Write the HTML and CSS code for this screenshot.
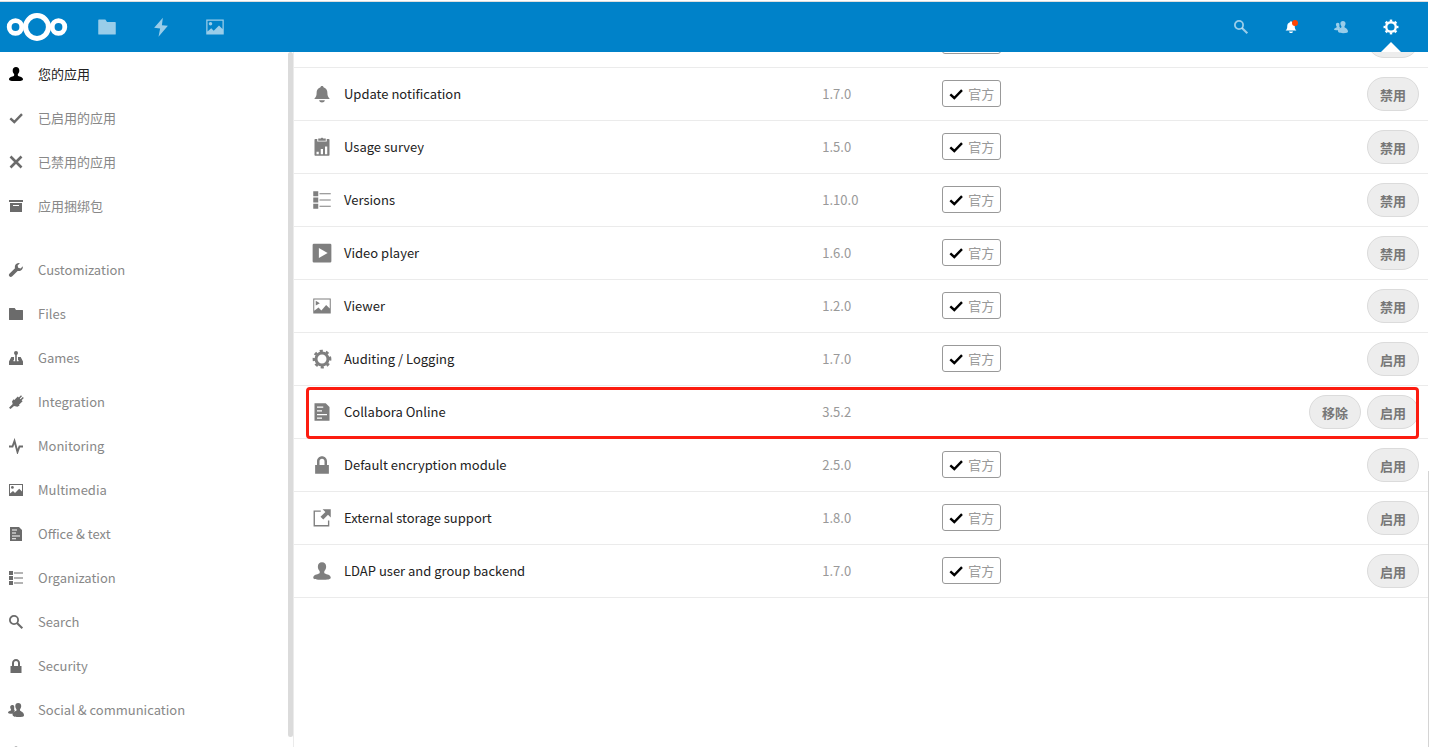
FILE: index.html
```html
<!DOCTYPE html>
<html lang="zh-CN">
<head>
<meta charset="utf-8">
<title>应用</title>
<meta name="viewport" content="width=device-width, initial-scale=1">
<link rel="stylesheet" href="styles.css">
</head>
<body>
<svg class="sprite" aria-hidden="true">
  <symbol id="i-user" viewBox="0 0 16 16"><path d="M8 1C5.900 1 4.700 2.500 4.700 4.400c0 1.300.3 2.300 1.200 3.400.5.700.4 1.700-.1 2.100C4.200 10.600 1 11 1 13.200 1 14.800 3.500 15 8 15s7-.2 7-1.800c0-2.200-3.200-2.600-4.800-3.300-.5-.4-.6-1.400-.1-2.100.9-1.100 1.200-2.100 1.200-3.400C11.300 2.500 10.100 1 8 1z"/></symbol>
  <symbol id="i-check" viewBox="0 0 16 16"><path d="M2.300 8.300 6.300 12 14 4.200" fill="none" stroke="currentColor" stroke-width="2.400"/></symbol>
  <symbol id="i-close" viewBox="0 0 16 16"><path d="M2.500 2.500l11 11M13.500 2.500l-11 11" fill="none" stroke="currentColor" stroke-width="2.600"/></symbol>
  <symbol id="i-box" viewBox="0 0 16 16"><path d="M1 2h14v2H1zM2 5h12v9H2zm3 2v1h6V7z" fill-rule="evenodd"/></symbol>
  <symbol id="i-wrench" viewBox="0 0 16 16"><path d="M14.800 4.300 12.600 6.400 10.200 5.800 9.600 3.400 11.800 1.200C9.800.700 7.700 1.900 7 3.700c-.3 1-.2 1.800 0 2.600L1.400 11.800c-.8.8-.6 1.800 0 2.500s1.900.8 2.600.1L9.600 8.900c2.600.9 5.700-1.200 5.200-4.600z"/></symbol>
  <symbol id="i-folder" viewBox="0 0 16 16"><path d="M1.500 2H6.700L8 4h6.500a.5.5 0 0 1 .5.500v9a.5.5 0 0 1-.5.500h-13a.5.5 0 0 1-.5-.5v-11a.5.5 0 0 1 .5-.5z"/></symbol>
  <symbol id="i-games" viewBox="0 0 16 16"><path d="M1 11.500 3.300 7H6v3h-.5v1.200h5V10H10V7h2.700L15 11.500V15H1z"/><circle cx="8" cy="3" r="2"/><path d="M7.200 4h1.600v8H7.200z"/></symbol>
  <symbol id="i-plug" viewBox="0 0 16 16"><path d="M1 13.700 4.700 10 4 7.500 5.500 5.300 6.300 6 9.800 2.400l1 1L13 1.200l1 1L11.800 4.500 12.500 5.200 14.800 3l1 1-2.200 2.200 1 1-3.600 3.500.6.800-2.200 1.200L6 12l-3.500 3z"/></symbol>
  <symbol id="i-pulse" viewBox="0 0 16 16"><path d="M1 8.500h3.500L6.500 3l3 11 2-5.500H15" fill="none" stroke="currentColor" stroke-width="1.900"/></symbol>
  <symbol id="i-image" viewBox="0 0 16 16"><path d="M1 2h14v12H1zm1 1v8.500L5 9l2 2 4.200-4.200L14 9.500V3z" fill-rule="evenodd"/><circle cx="4.400" cy="5.400" r="1.400"/></symbol>
  <symbol id="i-view" viewBox="0 0 16 16"><path d="M1 2h14v12H1zm.8.800v9L5.200 9.200 7.500 11.500 11.300 7.200 14.200 10V2.800z" fill-rule="evenodd"/><path d="M3 3.800 6.300 5.700 3 7.600z"/></symbol>
  <symbol id="i-doc" viewBox="0 0 16 16"><path d="M2 1h9l3 3v11H2zM4 3.500v1h5v-1zM4 6.500v1h4v-1zM4 9.500v1h8v-1zM4 12.300v1h4v-1z" fill-rule="evenodd"/></symbol>
  <symbol id="i-list" viewBox="0 0 16 16"><path d="M1 1h4v4H1zM1 6h4v4H1zM1 11h4v4H1zM6 2.600h9v.8H6zM6 7.600h9v.8H6zM6 12.600h9v.8H6z"/></symbol>
  <symbol id="i-search" viewBox="0 0 16 16"><circle cx="6" cy="6" r="4.100" fill="none" stroke="currentColor" stroke-width="1.800"/><path d="m9 9 5.300 5.300" stroke="currentColor" stroke-width="2.100"/></symbol>
  <symbol id="i-lock" viewBox="0 0 16 16"><path d="M8 1C5.800 1 4 2.800 4 5v3H2.500v7h11V8H12V5c0-2.200-1.800-4-4-4zm0 2c1.200 0 2 .9 2 2v3H6V5c0-1.100.8-2 2-2z"/></symbol>
  <symbol id="i-users" viewBox="0 0 16 16"><path d="M10.200 1C8.300 1 7.300 2.300 7.300 4c0 1.200.3 2 1 2.900.4.600.3 1.400-.1 1.800C7 9.300 4.500 9.800 4.500 12c0 2.300 1.500 3 5.900 3 4.200 0 5.600-.5 5.600-1.800 0-2.800-2.700-3.600-3.700-4.500-.4-.4-.5-1.200-.1-1.800.7-.9 1-1.700 1-2.900C13.200 2.300 12.100 1 10.200 1z"/><path d="M4.200 3C2.900 3 2.200 4 2.200 5.200c0 .8.200 1.400.7 2 .3.500.2 1-.1 1.300C2 9 0 9.300 0 10.600c0 1 1 1.200 4.600 1.200L7 8.600c-.4-.3-1-.8-.8-1.400V4.200C5.900 3.400 5.200 3 4.200 3z"/></symbol>
  <symbol id="i-bell" viewBox="0 0 16 16"><path d="M8 1.500c-.7 0-1.100.4-1.200 1C4.500 3.200 3.700 5 3.700 7c0 2.600-.5 3.300-1.900 5h12.400c-1.400-1.700-1.900-2.400-1.900-5 0-2-.8-3.800-3.100-4.500-.1-.6-.5-1-1.200-1zM5.700 13c.2 1.200 1.200 1.800 2.300 1.800s2.100-.6 2.300-1.800z"/></symbol>
  <symbol id="i-survey" viewBox="0 0 16 16"><path d="M2.500 1.500h1.700V3.600h7.600V1.500h1.700l.5.500v12.500l-.5.500h-11l-.5-.5V2zM3.600 11.800v2h1.800v-2zM7 9.500v4.300h1.800V9.500zM10.400 7.600v6.200h1.800V7.600z" fill-rule="evenodd"/><path d="M5 1.200h2L7.500.5h1l.5.700h2v1.700H5z"/></symbol>
  <symbol id="i-play" viewBox="0 0 16 16"><path d="M1.500.5h13a1 1 0 0 1 1 1v13a1 1 0 0 1-1 1h-13a1 1 0 0 1-1-1v-13a1 1 0 0 1 1-1zM5.500 4v8L12.500 8z" fill-rule="evenodd"/></symbol>
  <symbol id="i-gear" viewBox="0 0 16 16"><g fill="none" stroke="currentColor"><circle cx="8" cy="8" r="4.800" stroke-width="2.400"/><circle cx="8" cy="8" r="6.500" stroke-width="2" pathLength="16" stroke-dasharray="1 1" stroke-dashoffset=".5"/></g></symbol>
  <symbol id="i-external" viewBox="0 0 16 16"><path d="M7 2.500H1.800v11.700h11.500V10" fill="none" stroke="currentColor" stroke-width="1.100"/><path d="M8.500 1H15v6.500L12.800 5.300 9 9.200 6.800 7 10.700 3.200z"/></symbol>
  <symbol id="i-bolt" viewBox="0 0 16 16"><path d="M9.500.5 2.500 8.500 7.300 9.100 6 15.700 13.500 7 8.700 6.600z"/></symbol>
</svg>

<header class="topbar">
  <a class="logo" href="#" aria-label="Nextcloud">
    <svg viewBox="0 0 62 30" fill="none" stroke="#fff"><circle cx="31" cy="15" r="11.400" stroke-width="5"/><circle cx="9.500" cy="15" r="6.300" stroke-width="4.800"/><circle cx="52.500" cy="15" r="6.300" stroke-width="4.800"/></svg>
  </a>
  <nav class="apps" aria-label="应用菜单">
    <a href="#" aria-label="文件"><svg class="icon"><use href="#i-folder"/></svg></a>
    <a href="#" aria-label="动态"><svg class="icon"><use href="#i-bolt"/></svg></a>
    <a href="#" aria-label="图库"><svg class="icon"><use href="#i-image"/></svg></a>
  </nav>
  <div class="tools">
    <button type="button" aria-label="搜索"><svg class="icon"><use href="#i-search"/></svg></button>
    <button type="button" class="lit" aria-label="通知"><svg class="icon small"><use href="#i-bell"/></svg><span class="dot"></span></button>
    <button type="button" aria-label="联系人"><svg class="icon small"><use href="#i-users"/></svg></button>
    <button type="button" class="lit open" aria-label="设置"><svg class="icon"><use href="#i-gear"/></svg></button>
  </div>
</header>

<div class="content">
  <nav class="sidebar" aria-label="应用分类">
    <ul>
      <li><a class="active" href="#"><svg class="icon"><use href="#i-user"/></svg>您的应用</a></li>
      <li><a href="#"><svg class="icon"><use href="#i-check"/></svg>已启用的应用</a></li>
      <li><a href="#"><svg class="icon"><use href="#i-close"/></svg>已禁用的应用</a></li>
      <li><a href="#"><svg class="icon"><use href="#i-box"/></svg>应用捆绑包</a></li>
    </ul>
    <ul>
      <li><a href="#"><svg class="icon"><use href="#i-wrench"/></svg>Customization</a></li>
      <li><a href="#"><svg class="icon"><use href="#i-folder"/></svg>Files</a></li>
      <li><a href="#"><svg class="icon"><use href="#i-games"/></svg>Games</a></li>
      <li><a href="#"><svg class="icon"><use href="#i-plug"/></svg>Integration</a></li>
      <li><a href="#"><svg class="icon"><use href="#i-pulse"/></svg>Monitoring</a></li>
      <li><a href="#"><svg class="icon"><use href="#i-image"/></svg>Multimedia</a></li>
      <li><a href="#"><svg class="icon"><use href="#i-doc"/></svg>Office &amp; text</a></li>
      <li><a href="#"><svg class="icon"><use href="#i-list"/></svg>Organization</a></li>
      <li><a href="#"><svg class="icon"><use href="#i-search"/></svg>Search</a></li>
      <li><a href="#"><svg class="icon"><use href="#i-lock"/></svg>Security</a></li>
      <li><a href="#"><svg class="icon"><use href="#i-users"/></svg>Social &amp; communication</a></li>
      <li><a href="#" aria-label="Tools"><svg class="icon"><use href="#i-gear"/></svg></a></li>
    </ul>
    <div class="scrollbar"></div>
  </nav>

  <main class="list">
    <table>
      <colgroup><col class="c-icon"><col class="c-name"><col class="c-version"><col class="c-level"><col></colgroup>
      <tbody>
        <tr><td></td><td></td><td></td><td class="level"><span class="badge"></span></td><td class="actions"><button type="button" aria-label="禁用"></button></td></tr>
        <tr><td class="pic"><svg class="icon"><use href="#i-bell"/></svg></td><td class="name">Update notification</td><td>1.7.0</td><td class="level"><span class="badge"><svg class="icon"><use href="#i-check"/></svg>官方</span></td><td class="actions"><button type="button">禁用</button></td></tr>
        <tr><td class="pic"><svg class="icon"><use href="#i-survey"/></svg></td><td class="name">Usage survey</td><td>1.5.0</td><td class="level"><span class="badge"><svg class="icon"><use href="#i-check"/></svg>官方</span></td><td class="actions"><button type="button">禁用</button></td></tr>
        <tr><td class="pic"><svg class="icon"><use href="#i-list"/></svg></td><td class="name">Versions</td><td>1.10.0</td><td class="level"><span class="badge"><svg class="icon"><use href="#i-check"/></svg>官方</span></td><td class="actions"><button type="button">禁用</button></td></tr>
        <tr><td class="pic"><svg class="icon"><use href="#i-play"/></svg></td><td class="name">Video player</td><td>1.6.0</td><td class="level"><span class="badge"><svg class="icon"><use href="#i-check"/></svg>官方</span></td><td class="actions"><button type="button">禁用</button></td></tr>
        <tr><td class="pic"><svg class="icon"><use href="#i-view"/></svg></td><td class="name">Viewer</td><td>1.2.0</td><td class="level"><span class="badge"><svg class="icon"><use href="#i-check"/></svg>官方</span></td><td class="actions"><button type="button">禁用</button></td></tr>
        <tr><td class="pic"><svg class="icon"><use href="#i-gear"/></svg></td><td class="name">Auditing / Logging</td><td>1.7.0</td><td class="level"><span class="badge"><svg class="icon"><use href="#i-check"/></svg>官方</span></td><td class="actions"><button type="button">启用</button></td></tr>
        <tr class="marked"><td class="pic"><svg class="icon"><use href="#i-doc"/></svg></td><td class="name">Collabora Online</td><td>3.5.2</td><td></td><td class="actions"><button type="button">移除</button><button type="button">启用</button><span class="marker"></span></td></tr>
        <tr><td class="pic"><svg class="icon"><use href="#i-lock"/></svg></td><td class="name">Default encryption module</td><td>2.5.0</td><td class="level"><span class="badge"><svg class="icon"><use href="#i-check"/></svg>官方</span></td><td class="actions"><button type="button">启用</button></td></tr>
        <tr><td class="pic"><svg class="icon"><use href="#i-external"/></svg></td><td class="name">External storage support</td><td>1.8.0</td><td class="level"><span class="badge"><svg class="icon"><use href="#i-check"/></svg>官方</span></td><td class="actions"><button type="button">启用</button></td></tr>
        <tr><td class="pic"><svg class="icon"><use href="#i-user"/></svg></td><td class="name">LDAP user and group backend</td><td>1.7.0</td><td class="level"><span class="badge"><svg class="icon"><use href="#i-check"/></svg>官方</span></td><td class="actions"><button type="button">启用</button></td></tr>
      </tbody>
    </table>
  </main>
</div>
<div class="page-scroll"></div>
</body>
</html>
```
FILE: styles.css
```css
* { box-sizing: border-box; }

body {
  position: relative;
  display: flex;
  flex-direction: column;
  height: 100vh;
  margin: 0;
  padding: 1px 1px 0 0;
  overflow: hidden;
  background: #fff;
  color: #222;
  font: 13px/20px "Noto Sans CJK SC", sans-serif;
}

a { color: inherit; text-decoration: none; }
button { font: inherit; cursor: pointer; }
ul { margin: 0; padding: 0; list-style: none; }
.sprite { position: absolute; width: 0; height: 0; }
.icon { flex: none; display: block; width: 16px; height: 16px; fill: currentColor; }

/* Top bar */
.topbar {
  flex: none;
  display: flex;
  align-items: stretch;
  height: 51px;
  padding-left: 6px;
  border-top: 1px solid #ddd;
  background: #0082c9;
  color: #fff;
}
.logo { display: flex; align-items: center; width: 74px; }
.logo svg { width: 62px; height: 30px; }
.apps { display: flex; }
.apps a { display: grid; place-items: center; width: 54px; opacity: .6; }
.apps .icon { width: 20px; height: 20px; }
.tools { display: flex; margin-left: auto; padding-right: 12px; }
.tools button {
  position: relative;
  display: grid;
  place-items: center;
  width: 50px;
  padding: 0;
  border: 0;
  background: none;
  color: rgba(255, 255, 255, .6);
}
.tools .lit { color: #fff; }
.tools .small { width: 14px; height: 14px; }
.tools .dot {
  position: absolute;
  top: 18px;
  right: 18px;
  width: 6px;
  height: 6px;
  border-radius: 50%;
  background: #ff4402;
}
.tools .open::after {
  content: "";
  position: absolute;
  bottom: 0;
  left: 15px;
  border: 10px solid transparent;
  border-top: 0;
  border-bottom-color: #fff;
}

/* Page body */
.content { flex: 1; display: flex; min-height: 0; }
.sidebar {
  position: relative;
  flex: none;
  width: 294px;
  overflow: hidden;
  border-right: 1px solid #ebebeb;
}
.sidebar ul + ul { margin-top: 20px; }
.sidebar a {
  display: flex;
  align-items: center;
  gap: 14px;
  height: 44px;
  padding-left: 8px;
  color: #888;
}
.sidebar .icon { color: #6b6b6b; }
.sidebar .active { color: #222; }
.sidebar .active .icon { color: #000; }
.scrollbar {
  position: absolute;
  top: 0;
  right: 0;
  bottom: 10px;
  width: 5px;
  border-radius: 3px;
  background: #dbdbdb;
}
.page-scroll {
  position: absolute;
  right: 0;
  bottom: 0;
  width: 1px;
  height: 37%;
  background: #d4d4d4;
}

/* App list, scrolled part of a row */
.list { flex: 1; min-width: 0; overflow: hidden; }
.list table {
  width: 100%;
  margin-top: -37px;
  border-collapse: separate;
  border-spacing: 0;
  table-layout: fixed;
}
.c-icon { width: 50px; }
.c-name { width: 42%; }
.c-version { width: 120px; }
.c-level { width: 120px; }
.list td {
  height: 53px;
  padding: 0 2px;
  border-bottom: 1px solid #ebebeb;
  color: #999;
}
.list .name { padding: 0; color: #222; }
.list .level { padding-bottom: 2px; }
.pic .icon { width: 20px; height: 20px; margin-left: 16px; color: #7f7f7f; }
.badge {
  display: flex;
  align-items: center;
  gap: 4px;
  width: 59px;
  height: 27px;
  padding: 1px 5px 0;
  border: 1px solid #999;
  border-radius: 3px;
}
.badge .icon { color: #000; }
.list .actions { padding-right: 9px; text-align: right; }
.actions button {
  width: 52px;
  height: 34px;
  margin-left: 6px;
  padding: 2px 0 0;
  border: 1px solid #dbdbdb;
  border-radius: 17px;
  background: #ededed;
  color: #777;
  font-weight: 700;
  line-height: 20px;
  vertical-align: middle;
}
.marked { position: relative; }
.marker {
  position: absolute;
  inset: 1px 9px 0 12px;
  border: 3px solid #fc1c10;
  border-radius: 4px;
  pointer-events: none;
}
```
